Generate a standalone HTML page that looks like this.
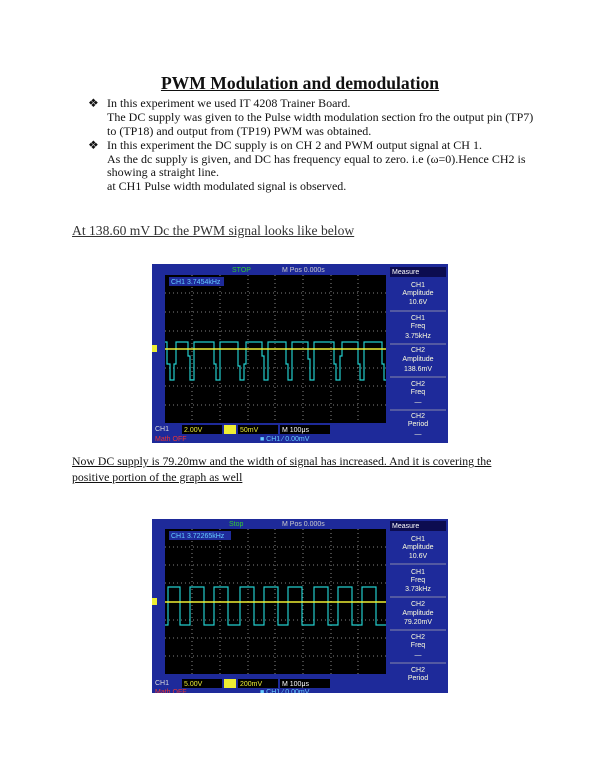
<!DOCTYPE html>
<html><head><meta charset="utf-8"><style>
body{margin:0;background:#fff;width:600px;height:776px;position:relative;font-family:"Liberation Serif",serif;color:#111}
.t{position:absolute;white-space:nowrap;font-size:12px;line-height:13px}
.u{text-decoration:underline}
svg{position:absolute}
svg text{font-family:"Liberation Sans",sans-serif;font-size:7px}
</style></head><body>
<div class="t u" style="left:0;width:600px;text-align:center;top:72px;font-size:17.6px;line-height:22px;font-weight:bold">PWM Modulation and demodulation</div>
<div class="t" style="left:88px;top:97px">❖</div>
<div class="t" style="left:107px;top:97px">In this experiment we used IT 4208 Trainer Board.</div>
<div class="t" style="left:107px;top:111px">The DC supply was given to the Pulse width modulation section fro the output pin (TP7)</div>
<div class="t" style="left:107px;top:125px">to (TP18) and output from (TP19) PWM was obtained.</div>
<div class="t" style="left:88px;top:139px">❖</div>
<div class="t" style="left:107px;top:139px">In this experiment the DC supply is on CH 2 and PWM output signal at CH 1.</div>
<div class="t" style="left:107px;top:153px">As the dc supply is given, and DC has frequency equal to zero. i.e (ω=0).Hence CH2 is</div>
<div class="t" style="left:107px;top:166px">showing a straight line.</div>
<div class="t" style="left:107px;top:180px">at CH1 Pulse width modulated signal is observed.</div>
<div class="t u" style="left:72px;top:223px;font-size:13.6px;line-height:16px;color:#333">At 138.60 mV Dc the PWM signal looks like below</div>
<div class="t u" style="left:72px;top:455px;font-size:11.8px">Now DC supply is 79.20mw and the width of signal has increased. And it is covering the</div>
<div class="t u" style="left:72px;top:471px;font-size:11.8px">positive portion of the graph as well</div>

<svg style="left:152px;top:264px" width="296" height="179" viewBox="0 0 296 179">
<rect width="296" height="179" fill="#1e2a9a"/>
<rect x="13" y="11" width="221" height="148" fill="#000"/>
<g stroke="#aaa" stroke-width="0.8" stroke-dasharray="1,3">
<path d="M40 11V159M68 11V159M96 11V159M123 11V159M151 11V159M179 11V159M206 11V159M13 29H234M13 48H234M13 67H234M13 104H234M13 122H234M13 141H234"/></g>
<path d="M13 85H234" stroke="#888" stroke-dasharray="1,2"/>
<rect x="17" y="13" width="55" height="9" fill="#1e2a9a"/>
<text x="19" y="20" fill="#6cf">CH1 3.7454kHz</text>
<text x="80" y="8" fill="#3c3">STOP</text><text x="130" y="8" fill="#ccc">M Pos 0.000s</text>
<rect x="238" y="3" width="56" height="10" fill="#0c0c50"/><text x="240" y="10" fill="#fff">Measure</text>
<g fill="#ffd" text-anchor="middle"><text x="266" y="23">CH1</text><text x="266" y="31">Amplitude</text><text x="266" y="40">10.6V</text>
<text x="266" y="56">CH1</text><text x="266" y="64">Freq</text><text x="266" y="74">3.75kHz</text>
<text x="266" y="88">CH2</text><text x="266" y="97">Amplitude</text><text x="266" y="107">138.6mV</text>
<text x="266" y="122">CH2</text><text x="266" y="130">Freq</text><text x="266" y="140">—</text>
<text x="266" y="154">CH2</text><text x="266" y="162">Period</text><text x="266" y="172">—</text></g>
<path d="M238 47H294M238 80H294M238 113H294M238 146H294" stroke="#88a"/>
<path d="M13 78H15V100H18V116H22V100H24V78H36V92H38V116H42V78H62V100H64V116H68V78H86V102H88V116H92V100H94V78H110V92H112V116H116V78H134V100H136V116H140V78H156V95H158V116H162V78H182V100H184V116H188V92H190V78H206V100H208V116H212V78H230V100H232V116H234" fill="none" stroke="#2cc" stroke-width="1.2"/>
<path d="M13 85H234" stroke="#ee3" stroke-width="1.6"/>
<rect x="0" y="81" width="5" height="7" fill="#ee3"/>
<text x="3" y="167" fill="#ddd">CH1</text><rect x="30" y="161" width="40" height="9" fill="#000"/><text x="32" y="168" fill="#ee3">2.00V</text>
<rect x="72" y="161" width="12" height="9" fill="#ee3"/><rect x="86" y="161" width="40" height="9" fill="#000"/><text x="88" y="168" fill="#ee3">50mV</text>
<rect x="128" y="161" width="50" height="9" fill="#000"/><text x="130" y="168" fill="#fff">M 100μs</text>
<text x="3" y="177" fill="#e33">Math OFF</text><text x="108" y="177" fill="#6cf">■ CH1  ⁄  0.00mV</text>
</svg>

<svg style="left:152px;top:519px" width="296" height="174" viewBox="0 0 296 174">
<rect width="296" height="174" fill="#1e2a9a"/>
<rect x="13" y="10" width="221" height="145" fill="#000"/>
<g stroke="#aaa" stroke-width="0.8" stroke-dasharray="1,3">
<path d="M40 10V155M68 10V155M96 10V155M123 10V155M151 10V155M179 10V155M206 10V155M13 28H234M13 46H234M13 64H234M13 101H234M13 119H234M13 137H234"/></g>
<rect x="17" y="12" width="62" height="9" fill="#1e2a9a"/>
<text x="19" y="19" fill="#6cf">CH1 3.72265kHz</text>
<text x="77" y="7" fill="#3c3">Stop</text><text x="130" y="7" fill="#ccc">M Pos 0.000s</text>
<rect x="238" y="2" width="56" height="10" fill="#0c0c50"/><text x="240" y="9" fill="#fff">Measure</text>
<g fill="#ffd" text-anchor="middle"><text x="266" y="22">CH1</text><text x="266" y="30">Amplitude</text><text x="266" y="39">10.6V</text>
<text x="266" y="55">CH1</text><text x="266" y="63">Freq</text><text x="266" y="72">3.73kHz</text>
<text x="266" y="87">CH2</text><text x="266" y="96">Amplitude</text><text x="266" y="105">79.20mV</text>
<text x="266" y="120">CH2</text><text x="266" y="128">Freq</text><text x="266" y="138">—</text>
<text x="266" y="153">CH2</text><text x="266" y="161">Period</text></g>
<path d="M238 45H294M238 78H294M238 111H294M238 144H294" stroke="#88a"/>
<path d="M13 106H16V68H28V106H38V68H52V106H62V68H76V106H88V68H102V106H112V68H126V106H136V68H150V106H162V68H176V106H186V68H200V106H210V68H224V106H234" fill="none" stroke="#2cc" stroke-width="1.2"/>
<path d="M13 83H234" stroke="#ee3" stroke-width="1.6"/>
<rect x="0" y="79" width="5" height="7" fill="#ee3"/>
<text x="3" y="166" fill="#ddd">CH1</text><rect x="30" y="160" width="40" height="9" fill="#000"/><text x="32" y="167" fill="#ee3">5.00V</text>
<rect x="72" y="160" width="12" height="9" fill="#ee3"/><rect x="86" y="160" width="40" height="9" fill="#000"/><text x="88" y="167" fill="#ee3">200mV</text>
<rect x="128" y="160" width="50" height="9" fill="#000"/><text x="130" y="167" fill="#fff">M 100μs</text>
<text x="3" y="175" fill="#e33">Math OFF</text><text x="108" y="175" fill="#6cf">■ CH1  ⁄  0.00mV</text>
</svg>
</body></html>
